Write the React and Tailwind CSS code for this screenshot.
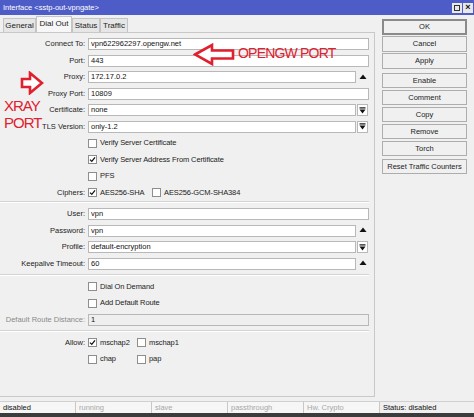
import React from 'react';

const UI = { fontFamily: '"Liberation Sans", Arial, sans-serif' };

function UpArrow() {
  return (
    <svg width="8" height="7" viewBox="0 0 8 7">
      <path d="M4 0.5 L7.5 5 L0.5 5 Z" fill="#111" />
    </svg>
  );
}

function DropButton() {
  return (
    <div className="w-[11px] h-[12px] border border-[#b8b8b8] bg-white flex items-center justify-center">
      <svg width="7" height="7" viewBox="0 0 7 7">
        <rect x="0.5" y="0.3" width="6" height="1.2" fill="#111" />
        <path d="M0.5 2.5 L6.5 2.5 L3.5 6.5 Z" fill="#111" />
      </svg>
    </div>
  );
}

function Field({ label, value, suffix, disabled }) {
  return (
    <div className="h-[16.5px] flex items-center">
      <div className={`w-[86px] text-right text-[7.5px] pr-[1px] whitespace-nowrap ${disabled ? 'text-[#8a8a8a]' : 'text-[#222]'}`}>{label}</div>
      <div className="flex-1 flex items-center ml-[2px] mr-[5px]">
        <div className={`flex-1 h-[12px] border border-[#b8b8b8] ${disabled ? 'bg-[#efefef]' : 'bg-white'} text-[7.5px] leading-[10px] pl-[2px] text-[#111] whitespace-nowrap overflow-hidden`}>
          {value}
        </div>
        {suffix === 'up' ? (
          <div className="w-[13px] flex items-center justify-center"><UpArrow /></div>
        ) : null}
        {suffix === 'drop' ? (
          <div className="ml-[1px] mr-[1px]"><DropButton /></div>
        ) : null}
      </div>
    </div>
  );
}

function Box({ checked }) {
  return (
    <div className="w-[9px] h-[9px] border border-[#8e8e8e] bg-white flex items-center justify-center shrink-0">
      {checked ? (
        <svg width="7" height="7" viewBox="0 0 7 7">
          <path d="M1 3.6 L2.8 5.4 L6 1.4" fill="none" stroke="#111" strokeWidth="1.3" />
        </svg>
      ) : null}
    </div>
  );
}

function Check({ label, checked }) {
  return (
    <div className="flex items-center gap-[3px]">
      <Box checked={checked} />
      <span className="text-[7.5px] text-[#222] whitespace-nowrap tracking-[-0.1px]">{label}</span>
    </div>
  );
}

function CheckRow({ label, items }) {
  return (
    <div className="h-[16.5px] flex items-center">
      <div className="w-[86px] text-right text-[7.5px] text-[#222] pr-[1px]">{label}</div>
      <div className="ml-[2px] flex items-center">
        {items.map((it, i) => (
          <div key={i} className={i === 0 ? (label === 'Ciphers:' ? 'w-[64px]' : 'w-[49px]') : ''}>
            <Check label={it.label} checked={it.checked} />
          </div>
        ))}
      </div>
    </div>
  );
}

function Divider() {
  return <div className="border-t border-[#d4d4d4] border-b border-b-white mr-[5px]"></div>;
}

function Btn({ children, primary, extra }) {
  return (
    <div className={`h-[15.5px] w-[85px] flex items-center justify-center text-[7.5px] text-[#222] bg-[#f0f0f0] ${primary ? 'border-2 border-[#8a8a8a]' : 'border border-[#adadad]'} ${extra || 'mb-[1.5px]'}`}>
      {children}
    </div>
  );
}

export default function App() {
  const tabs = [
    { t: 'General', w: 'w-[33px]' },
    { t: 'Dial Out', w: 'w-[36px]' },
    { t: 'Status', w: 'w-[28px]' },
    { t: 'Traffic', w: 'w-[28px]' },
  ];
  const status = ['disabled', 'running', 'slave', 'passthrough', 'Hw. Crypto'];
  return (
    <div className="w-[474px] h-[417px] bg-[#f0f0f0] flex flex-col overflow-hidden relative" style={UI}>
      {/* title bar */}
      <div className="h-[15px] bg-[#4d5cc6] flex items-center justify-between pl-[3px] pr-[1px]">
        <span className="text-[7.5px] text-white">Interface &lt;sstp-out-vpngate&gt;</span>
        <div className="flex gap-[1px]">
          <div className="w-[10px] h-[10px] bg-[#e8e8e8] flex items-center justify-center">
            <div className="w-[6px] h-[6px] border border-[#333]"></div>
          </div>
          <div className="w-[10px] h-[10px] bg-[#e8e8e8] flex items-center justify-center text-[9px] leading-none text-[#111] font-bold">×</div>
        </div>
      </div>

      {/* body */}
      <div className="h-[386px] flex">
        <div className="w-[375px] flex flex-col">
          <div className="h-[17px] flex items-end pl-[3px]">
            {tabs.map(({ t, w }) => (
              <div
                key={t}
                className={`${w} text-center text-[8px] text-[#222] border border-b-0 border-[#c4c4c4] ${t === 'Dial Out' ? 'h-[16px] bg-[#f7f7f7] leading-[14px]' : 'h-[14px] bg-[#e6e6e6] leading-[13px]'}`}
              >
                {t}
              </div>
            ))}
          </div>
          <div className="h-[365px] border-t border-r border-b border-[#c8c8c8] pt-[2.75px]">
            <Field label="Connect To:" value="vpn622962297.opengw.net" />
            <Field label="Port:" value="443" />
            <Field label="Proxy:" value="172.17.0.2" suffix="up" />
            <Field label="Proxy Port:" value="10809" />
            <Field label="Certificate:" value="none" suffix="drop" />
            <Field label="TLS Version:" value="only-1.2" suffix="drop" />
            <CheckRow label="" items={[{ label: 'Verify Server Certificate' }]} />
            <CheckRow label="" items={[{ label: 'Verify Server Address From Certificate', checked: true }]} />
            <CheckRow label="" items={[{ label: 'PFS' }]} />
            <CheckRow label="Ciphers:" items={[{ label: 'AES256-SHA', checked: true }, { label: 'AES256-GCM-SHA384' }]} />
            <Divider />
            <div className="pt-[3px] pb-[2px]">
              <Field label="User:" value="vpn" />
              <Field label="Password:" value="vpn" suffix="up" />
              <Field label="Profile:" value="default-encryption" suffix="drop" />
              <Field label="Keepalive Timeout:" value="60" suffix="up" />
            </div>
            <Divider />
            <div className="pt-[2.5px] pb-[2px]">
              <CheckRow label="" items={[{ label: 'Dial On Demand' }]} />
              <CheckRow label="" items={[{ label: 'Add Default Route' }]} />
              <Field label="Default Route Distance:" value="1" disabled />
            </div>
            <Divider />
            <div className="pt-[2.5px]">
              <CheckRow label="Allow:" items={[{ label: 'mschap2', checked: true }, { label: 'mschap1' }]} />
              <CheckRow label="" items={[{ label: 'chap' }, { label: 'pap' }]} />
            </div>
          </div>
        </div>

        {/* buttons */}
        <div className="flex-1 pl-[7px] pt-[4px] flex flex-col">
          <Btn primary>OK</Btn>
          <Btn>Cancel</Btn>
          <Btn extra="mb-[4px]">Apply</Btn>
          <Btn>Enable</Btn>
          <Btn>Comment</Btn>
          <Btn>Copy</Btn>
          <Btn>Remove</Btn>
          <Btn extra="mb-[2.5px]">Torch</Btn>
          <Btn>Reset Traffic Counters</Btn>
        </div>
      </div>

      {/* status bar */}
      <div className="h-[12px] flex border-t border-[#d0d0d0]">
        {status.map((s, i) => (
          <div key={s} className={`w-[76px] border-r border-[#c8c8c8] pl-[3px] text-[7.5px] leading-[11px] bg-white/40 ${i === 0 ? 'text-[#111]' : 'text-[#a8a8a8]'}`}>{s}</div>
        ))}
        <div className="flex-1 pl-[3px] text-[7.5px] leading-[11px] text-[#111]">Status: disabled</div>
      </div>
      <div className="flex-1 bg-[#3c3c3c]"></div>

      {/* red annotations */}
      <svg className="absolute left-[193px] top-[43px]" width="42" height="23" viewBox="0 0 42 23">
        <path d="M2 11.5 L19 2 L19 7.5 L40 7.5 L40 15.5 L19 15.5 L19 21 Z" fill="#fff" stroke="#e0202e" strokeWidth="2.6" strokeLinejoin="miter" />
      </svg>
      <div className="absolute left-[238px] top-[46px] text-[14px] tracking-[-0.8px] text-[#e0202e] leading-none">OPENGW PORT</div>
      <svg className="absolute left-[20px] top-[71px]" width="24" height="24" viewBox="0 0 24 24">
        <path d="M2 8 L10 8 L10 2 L22 12 L10 22 L10 16 L2 16 Z" fill="#fff" stroke="#e0202e" strokeWidth="2.6" strokeLinejoin="miter" />
      </svg>
      <div className="absolute left-[4px] top-[97px] text-[15px] tracking-[-1px] text-[#e0202e] leading-[17px]">
        XRAY<br />PORT
      </div>
    </div>
  );
}
